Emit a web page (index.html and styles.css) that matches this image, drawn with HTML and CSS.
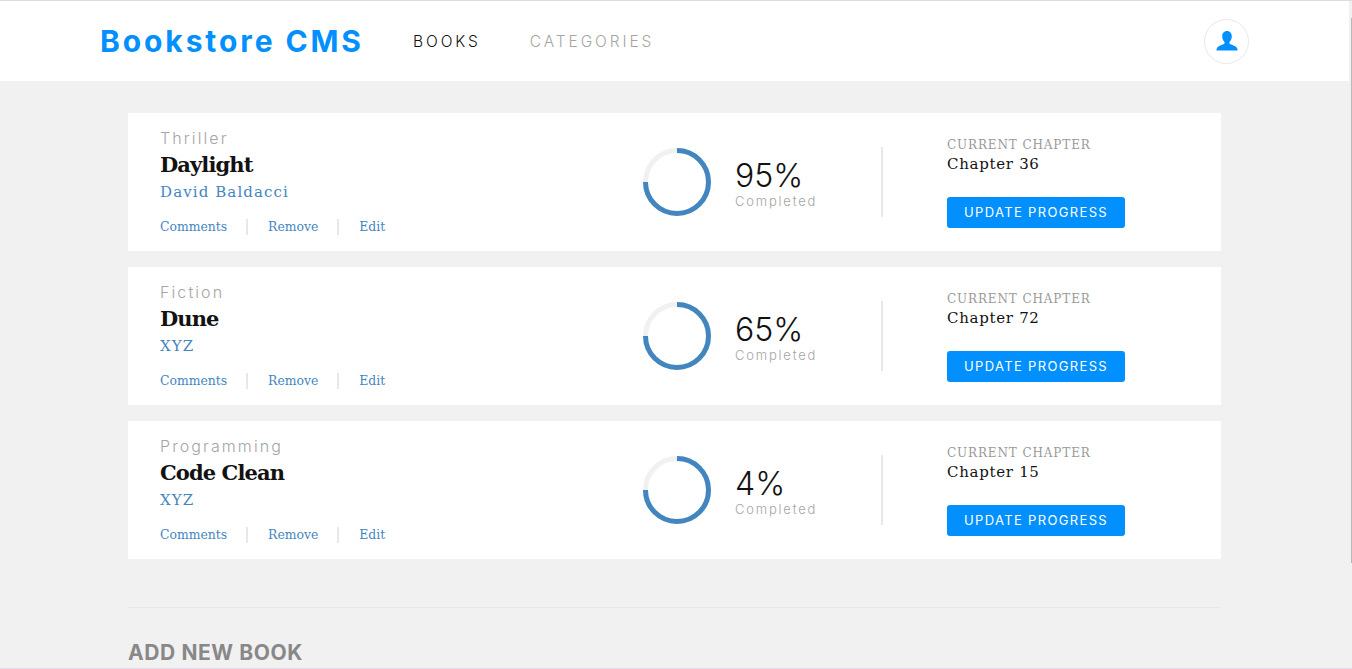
FILE: index.html
```html
<!DOCTYPE html>
<html lang="en">
<head>
<meta charset="utf-8">
<title>Bookstore CMS</title>
<link rel="stylesheet" href="styles.css">
</head>
<body>
<div class="frame">
  <header class="header">
    <div class="brand">Bookstore CMS</div>
    <nav class="nav">
      <a class="nav-link active">BOOKS</a>
      <a class="nav-link">CATEGORIES</a>
    </nav>
    <div class="avatar">
      <svg width="22" height="20" viewBox="0 0 22 20"><path class="avatar-icon" d="M11 0c3 0 4.800 2.300 4.800 5.300 0 2.300-.9 4.300-2.100 5.500-.5.500-.5 1.500.1 2 1.700 1.100 6 2.100 7.200 4.200.4.800.6 1.700.6 2.500H.4c0-.8.200-1.700.6-2.500 1.200-2.100 5.500-3.100 7.200-4.200.6-.5.6-1.500.1-2C7.100 9.600 6.200 7.600 6.200 5.300 6.200 2.300 8 0 11 0z"/></svg>
    </div>
  </header>
  <main class="main">
    <section class="card">
      <div class="info">
        <div class="genre">Thriller</div>
        <h2 class="title">Daylight</h2>
        <div class="author">David Baldacci</div>
        <div class="actions"><a class="action">Comments</a><a class="action">Remove</a><a class="action">Edit</a></div>
      </div>
      <div class="progress">
        <svg class="ring" width="68" height="68" viewBox="0 0 68 68"><circle class="ring-track" cx="34" cy="34" r="31.500"/><circle class="ring-bar" cx="34" cy="34" r="31.500" pathLength="100"/></svg>
        <div class="stat"><div class="percent">95%</div><div class="completed">Completed</div></div>
      </div>
      <div class="chapter">
        <div class="chapter-label">CURRENT CHAPTER</div>
        <div class="chapter-name">Chapter 36</div>
        <button class="update">UPDATE PROGRESS</button>
      </div>
    </section>
    <section class="card">
      <div class="info">
        <div class="genre">Fiction</div>
        <h2 class="title">Dune</h2>
        <div class="author">XYZ</div>
        <div class="actions"><a class="action">Comments</a><a class="action">Remove</a><a class="action">Edit</a></div>
      </div>
      <div class="progress">
        <svg class="ring" width="68" height="68" viewBox="0 0 68 68"><circle class="ring-track" cx="34" cy="34" r="31.500"/><circle class="ring-bar" cx="34" cy="34" r="31.500" pathLength="100"/></svg>
        <div class="stat"><div class="percent">65%</div><div class="completed">Completed</div></div>
      </div>
      <div class="chapter">
        <div class="chapter-label">CURRENT CHAPTER</div>
        <div class="chapter-name">Chapter 72</div>
        <button class="update">UPDATE PROGRESS</button>
      </div>
    </section>
    <section class="card">
      <div class="info">
        <div class="genre">Programming</div>
        <h2 class="title">Code Clean</h2>
        <div class="author">XYZ</div>
        <div class="actions"><a class="action">Comments</a><a class="action">Remove</a><a class="action">Edit</a></div>
      </div>
      <div class="progress">
        <svg class="ring" width="68" height="68" viewBox="0 0 68 68"><circle class="ring-track" cx="34" cy="34" r="31.500"/><circle class="ring-bar" cx="34" cy="34" r="31.500" pathLength="100"/></svg>
        <div class="stat"><div class="percent">4%</div><div class="completed">Completed</div></div>
      </div>
      <div class="chapter">
        <div class="chapter-label">CURRENT CHAPTER</div>
        <div class="chapter-name">Chapter 15</div>
        <button class="update">UPDATE PROGRESS</button>
      </div>
    </section>
    <hr class="rule">
    <h3 class="add-title">ADD NEW BOOK</h3>
  </main>
  <div class="scroll-thumb"></div>
</div>
</body>
</html>
```
FILE: styles.css
```css
* { box-sizing: border-box; }
html, body { margin: 0; height: 100%; overflow: hidden; background: #f1f1f1; }
.frame {
  position: relative;
  height: 669px;
  overflow: hidden;
  border-top: 1px solid #dcdcdc;
  border-bottom: 1px solid #e6d8e6;
  font-family: "Inter", "Open Sans", sans-serif;
}
.scroll-thumb { position: absolute; top: 17px; right: 0; width: 1px; height: 545px; background: #b8b8b8; }
.header {
  display: flex;
  align-items: center;
  height: 80px;
  width: 1349px;
  background: #fff;
  padding: 0 100px 0 100px;
}
.brand { width: 313px; font-size: 30px; font-weight: 700; letter-spacing: 2.900px; color: #0290ff; white-space: nowrap; }
.nav { display: flex; gap: 49px; flex: 1; }
.nav-link { font-size: 15.500px; font-weight: 300; letter-spacing: 2.900px; color: #a5a5a5; }
.nav-link.active { color: #121212; }
.avatar {
  width: 45px; height: 45px;
  border: 1px solid #e8e8e8; border-radius: 50%;
  display: flex; align-items: center; justify-content: center;
}
.avatar-icon { fill: #0290ff; }
.main { display: flex; flex-direction: column; gap: 16px; padding: 32px 131px 0 128px; }
.card {
  display: flex;
  height: 138px;
  background: #fff;
  padding: 15px 0 0 32px;
}
.info { width: 483px; }
.genre { font-size: 16px; font-weight: 300; letter-spacing: 2.100px; line-height: 21px; color: #a5a5a5; }
.title { margin: 0; font-family: "DejaVu Serif", serif; font-size: 21px; font-weight: 700; letter-spacing: -.9px; line-height: 32px; color: #121212; }
.author { font-family: "DejaVu Serif", serif; font-size: 15px; letter-spacing: 1.100px; line-height: 22px; color: #4386bf; }
.actions { display: flex; margin-top: 16px; }
.action { font-family: "DejaVu Serif", serif; font-size: 12.400px; line-height: 16px; color: #4386bf; padding-right: 19px; margin-right: 20px; border-right: 2px solid #e8e8e8; }
.action:last-child { border: 0; }
.progress { display: flex; align-items: center; width: 240px; height: 70px; margin-top: 19px; gap: 24px; border-right: 2px solid #e8e8e8; }
.ring { flex: none; }
.ring-track, .ring-bar { fill: none; stroke-width: 5; }
.ring-track { stroke: #f1f1f1; }
.ring-bar { stroke: #4386bf; stroke-dasharray: 75 25; transform: rotate(-90deg); transform-origin: center; }
.stat { padding-top: 2px; }
.percent { font-size: 32px; font-weight: 300; line-height: 38px; color: #121212; }
.completed { margin-top: -2px; font-size: 13px; font-weight: 300; letter-spacing: 1.800px; line-height: 16px; color: #a5a5a5; }
.chapter { margin: 9px 0 0 64px; }
.chapter-label { font-family: "DejaVu Serif", serif; font-size: 12px; letter-spacing: .87px; line-height: 16px; color: #9a9a9a; }
.chapter-name { font-family: "DejaVu Serif", serif; font-size: 15px; letter-spacing: .7px; line-height: 22px; color: #121212; }
.update {
  display: block; margin-top: 22px;
  width: 178px; height: 31px;
  padding: 0 0 1px;
  background: #0290ff; color: #fff;
  border: 0; border-radius: 3px;
  font-family: "Inter", sans-serif; font-size: 13px; font-weight: 400; letter-spacing: 1.350px;
}
.rule { width: 100%; margin: 32px 0 0; border: 0; border-top: 1px solid #e8e8e8; }
.add-title { margin: 16px 0 0; font-size: 21px; font-weight: 700; letter-spacing: .6px; line-height: 26px; color: #888; }
```
